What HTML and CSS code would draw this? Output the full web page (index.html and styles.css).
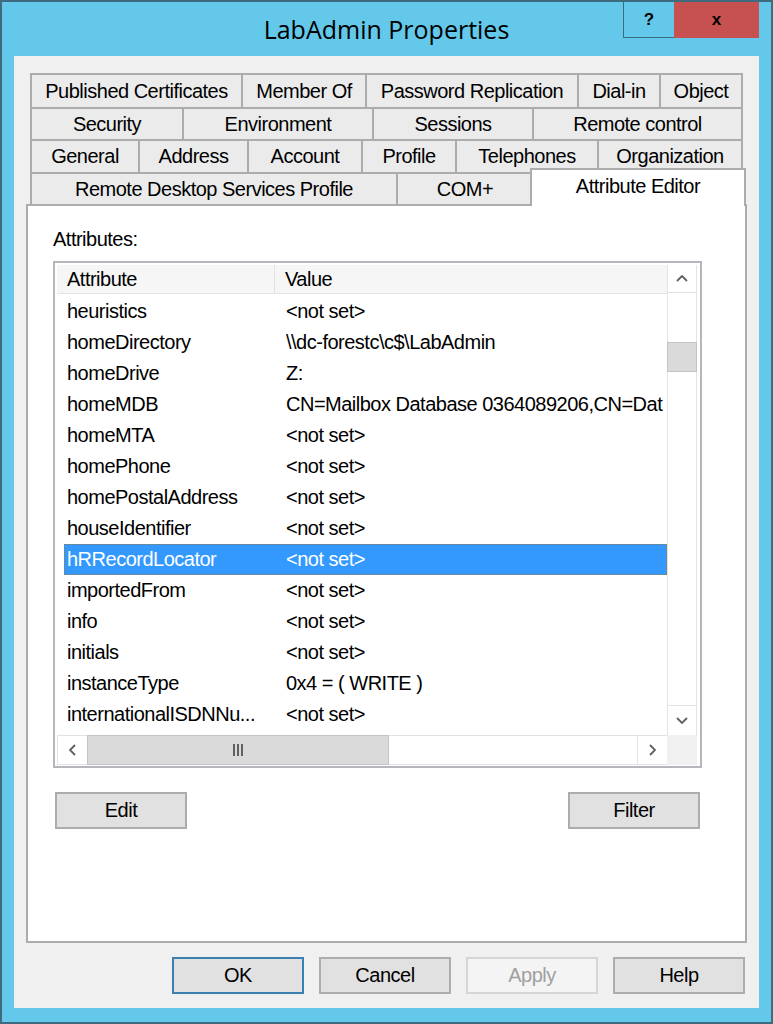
FILE: index.html
```html
<!DOCTYPE html>
<html lang="en">
    <head>
        <meta charset="UTF-8" />
        <title>LabAdmin Properties</title>
        <link rel="stylesheet" href="styles.css">
    </head>
    <body>
        <div class="window">
            <header class="titlebar">
                <div></div>
                <div class="title">LabAdmin Properties</div>
                <div class="caption-buttons">
                    <div class="cap help">?</div>
                    <div class="cap close">x</div>
                </div>
            </header>

            <div class="client">
                <div class="tabs">
                    <div class="tab-row row-1">
                        <div class="tab" style="width: 211px">Published Certificates</div>
                        <div class="tab" style="width: 124px">Member Of</div>
                        <div class="tab" style="width: 212px">Password Replication</div>
                        <div class="tab" style="width: 82px">Dial-in</div>
                        <div class="tab last" style="width: 84px">Object</div>
                    </div>
                    <div class="tab-row row-2">
                        <div class="tab" style="width: 152px">Security</div>
                        <div class="tab" style="width: 190px">Environment</div>
                        <div class="tab" style="width: 160px">Sessions</div>
                        <div class="tab last" style="width: 211px">Remote control</div>
                    </div>
                    <div class="tab-row row-3">
                        <div class="tab" style="width: 108px">General</div>
                        <div class="tab" style="width: 109px">Address</div>
                        <div class="tab" style="width: 114px">Account</div>
                        <div class="tab" style="width: 94px">Profile</div>
                        <div class="tab" style="width: 142px">Telephones</div>
                        <div class="tab last" style="width: 146px">Organization</div>
                    </div>
                    <div class="tab-row row-4">
                        <div class="tab" style="width: 366px">Remote Desktop Services Profile</div>
                        <div class="tab" style="width: 136px">COM+</div>
                        <div class="tab active">Attribute Editor</div>
                    </div>
                </div>

                <main class="panel">
                    <div class="label">Attributes:</div>

                    <div class="listview">
                        <div class="lv-main">
                            <div class="lv-header">
                                <div class="h-attr">Attribute</div>
                                <div class="h-val">Value</div>
                            </div>
                            <div class="lv-body">
                                <div class="row"><span class="attr">heuristics</span><span class="val">&lt;not set&gt;</span></div>
                                <div class="row"><span class="attr">homeDirectory</span><span class="val">\\dc-forestc\c$\LabAdmin</span></div>
                                <div class="row"><span class="attr">homeDrive</span><span class="val">Z:</span></div>
                                <div class="row"><span class="attr">homeMDB</span><span class="val">CN=Mailbox Database 0364089206,CN=Dat</span></div>
                                <div class="row"><span class="attr">homeMTA</span><span class="val">&lt;not set&gt;</span></div>
                                <div class="row"><span class="attr">homePhone</span><span class="val">&lt;not set&gt;</span></div>
                                <div class="row"><span class="attr">homePostalAddress</span><span class="val">&lt;not set&gt;</span></div>
                                <div class="row"><span class="attr">houseIdentifier</span><span class="val">&lt;not set&gt;</span></div>
                                <div class="row selected"><span class="attr">hRRecordLocator</span><span class="val">&lt;not set&gt;</span></div>
                                <div class="row"><span class="attr">importedFrom</span><span class="val">&lt;not set&gt;</span></div>
                                <div class="row"><span class="attr">info</span><span class="val">&lt;not set&gt;</span></div>
                                <div class="row"><span class="attr">initials</span><span class="val">&lt;not set&gt;</span></div>
                                <div class="row"><span class="attr">instanceType</span><span class="val">0x4 = ( WRITE )</span></div>
                                <div class="row"><span class="attr">internationalISDNNu...</span><span class="val">&lt;not set&gt;</span></div>
                            </div>
                        </div>

                        <div class="vscroll">
                            <div class="sbtn up">
                                <svg width="12" height="7" viewBox="0 0 12 7"><polyline points="1,6 6,1 11,6" fill="none" stroke="#606060" stroke-width="1.8"/></svg>
                            </div>
                            <div class="vtrack"><div class="vthumb"></div></div>
                            <div class="sbtn down">
                                <svg width="12" height="7" viewBox="0 0 12 7"><polyline points="1,1 6,6 11,1" fill="none" stroke="#606060" stroke-width="1.8"/></svg>
                            </div>
                        </div>

                        <div class="hscroll">
                            <div class="sbtn left">
                                <svg width="7" height="12" viewBox="0 0 7 12"><polyline points="6,1 1,6 6,11" fill="none" stroke="#606060" stroke-width="1.8"/></svg>
                            </div>
                            <div class="hthumb">
                                <svg width="12" height="12" viewBox="0 0 12 12"><rect x="1" y="0" width="2" height="12" fill="#606060"/><rect x="5" y="0" width="2" height="12" fill="#606060"/><rect x="9" y="0" width="2" height="12" fill="#606060"/></svg>
                            </div>
                            <div class="htrack"></div>
                            <div class="sbtn right">
                                <svg width="7" height="12" viewBox="0 0 7 12"><polyline points="1,1 6,6 1,11" fill="none" stroke="#606060" stroke-width="1.8"/></svg>
                            </div>
                        </div>

                        <div class="corner"></div>
                    </div>

                    <div class="panel-actions">
                        <button>Edit</button>
                        <button>Filter</button>
                    </div>
                </main>

                <footer class="dialog-actions">
                    <button class="default">OK</button>
                    <button>Cancel</button>
                    <button class="disabled">Apply</button>
                    <button>Help</button>
                </footer>
            </div>
        </div>
    </body>
</html>
```

FILE: styles.css
```css
* {
    box-sizing: border-box;
}

body {
    margin: 0;
    font-family: "Liberation Sans", Arial, sans-serif;
    font-size: 20px;
    letter-spacing: -0.5px;
    color: #000;
}

.window {
    width: 773px;
    height: 1024px;
    background-color: #63c8ea;
    border: 2px solid #3f6b7e;
    padding: 0 12px 14px;
    display: flex;
    flex-direction: column;
}

/* title bar */
.titlebar {
    height: 54px;
    flex: none;
    display: grid;
    grid-template-columns: 1fr auto 1fr;
}

.title {
    align-self: center;
    font-family: "Open Sans", sans-serif;
    font-size: 25px;
    letter-spacing: 0;
}

.caption-buttons {
    justify-self: end;
    display: flex;
    height: 36px;
}

.cap {
    display: flex;
    align-items: center;
    justify-content: center;
    font-size: 17px;
    font-weight: bold;
    letter-spacing: 0;
}

.cap.help {
    width: 51px;
    border-left: 1px solid #3f6b7e;
    border-bottom: 1px solid #3f6b7e;
}

.cap.close {
    width: 85px;
    background-color: #c75050;
}

/* dialog body */
.client {
    flex: 1;
    background-color: #f0f0f0;
    padding: 17px 12px 0;
}

.tabs {
    margin: 0 4px;
}

.tab-row {
    display: flex;
}

.tab {
    flex: none;
    display: flex;
    align-items: center;
    justify-content: center;
    white-space: nowrap;
    background-color: #ebebeb;
    border: 2px solid #acacac;
    border-right: 0;
    border-bottom: 0;
}

.tab.last {
    border-right: 2px solid #acacac;
}

.row-1 .tab { height: 34px; }
.row-2 .tab { height: 32px; }
.row-3 .tab { height: 33px; }
.row-4 .tab { height: 32px; }

.row-4 .tab.active {
    position: relative;
    z-index: 1;
    width: 216px;
    height: 38px;
    margin: -4px 0 -2px -2px;
    padding-bottom: 4px;
    background-color: #fff;
    border-right: 2px solid #acacac;
}

.panel {
    height: 739px;
    background-color: #fff;
    border: 2px solid #acacac;
    padding: 22px 43px 0 25px;
}

.label {
    line-height: 22px;
    margin-bottom: 11px;
}

/* list view */
.listview {
    width: 649px;
    height: 507px;
    border: 2px solid #b4b6bb;
    padding: 2px 3px 1px 2px;
    display: grid;
    grid-template-columns: 610px 30px;
    grid-template-rows: 470px 30px;
}

.lv-main {
    overflow: hidden;
}

.lv-header {
    display: flex;
    height: 29px;
    background-color: #f6f6f6;
    border-bottom: 1px solid #e5e5e5;
}

.h-attr {
    width: 218px;
    padding-left: 10px;
    border-right: 1px solid #e2e2e2;
    line-height: 28px;
}

.h-val {
    padding-left: 10px;
    line-height: 28px;
}

.lv-body {
    padding-top: 2px;
}

.row {
    display: flex;
    align-items: center;
    height: 31px;
    margin-left: 7px;
    white-space: nowrap;
}

.row .attr {
    flex: none;
    width: 222px;
    padding-left: 3px;
}

.row .val {
    flex: 1;
    overflow: hidden;
}

.row.selected {
    background-color: #3399ff;
    color: #fff;
    outline: 1px dotted #9c7a4a;
    outline-offset: -1px;
}

.vscroll {
    display: flex;
    flex-direction: column;
    border-left: 1px solid #e3e3e3;
    border-right: 1px solid #e3e3e3;
}

.sbtn {
    display: flex;
    align-items: center;
    justify-content: center;
    flex: none;
}

.sbtn.up {
    height: 28px;
    border-bottom: 1px solid #e3e3e3;
}

.sbtn.down {
    height: 30px;
    border-top: 1px solid #e3e3e3;
}

.vtrack {
    flex: 1;
}

.vthumb {
    margin: 49px -1px 0;
    height: 30px;
    background-color: #dadada;
    border: 1px solid #c4c4c4;
}

.hscroll {
    display: flex;
    border: 1px solid #e3e3e3;
    border-right: 0;
}

.sbtn.left {
    width: 29px;
}

.sbtn.right {
    width: 30px;
    border-left: 1px solid #e3e3e3;
}

.hthumb {
    width: 302px;
    margin: -1px 0;
    display: flex;
    align-items: center;
    justify-content: center;
    background-color: #dadada;
    border: 1px solid #c4c4c4;
}

.htrack {
    flex: 1;
}

.corner {
    background-color: #f0f0f0;
}

/* buttons */
button {
    font: inherit;
    letter-spacing: inherit;
    color: #000;
    width: 132px;
    height: 37px;
    padding: 0;
    background-color: #e1e1e1;
    border: 2px solid #adadad;
}

button.default {
    border-color: #3c7fb1;
}

button.disabled {
    background-color: #f4f4f4;
    border-color: #d5d5d5;
    color: #a0a0a0;
}

.panel-actions {
    display: flex;
    justify-content: space-between;
    padding: 0 2px;
    margin-top: 24px;
}

.dialog-actions {
    display: flex;
    justify-content: flex-end;
    gap: 15px;
    padding-right: 2px;
    margin-top: 14px;
}
```
